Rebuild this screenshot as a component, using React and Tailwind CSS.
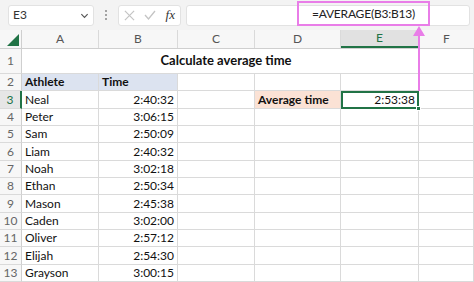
import React from "react";

const rows = [
  ["Neal", "2:40:32"],
  ["Peter", "3:06:15"],
  ["Sam", "2:50:09"],
  ["Liam", "2:40:32"],
  ["Noah", "3:02:18"],
  ["Ethan", "2:50:34"],
  ["Mason", "2:45:38"],
  ["Caden", "3:02:00"],
  ["Oliver", "2:57:12"],
  ["Elijah", "2:54:30"],
  ["Grayson", "3:00:15"],
];

const heights = [17, 18, 17, 17, 18, 17, 17, 18, 17, 17, 18, 17];

function Cell({ w, className = "", children }) {
  return (
    <div className={`flex h-full shrink-0 items-center border-r border-b border-[#dadada] px-[3px] ${w} ${className}`}>
      {children}
    </div>
  );
}

function RowHead({ n, active }) {
  return (
    <div
      className={`flex h-full w-[22px] shrink-0 items-center justify-center border-b border-[#dadada] text-[12px] ${
        active ? "border-r-2 border-r-[#217346] bg-[#e6e6e6] text-[#217346]" : "border-r border-r-[#cfcfcf] bg-[#f7f7f7] text-[#666]"
      }`}
    >
      {n}
    </div>
  );
}

export default function App() {
  return (
    <div className="relative h-[282px] w-[474px] overflow-hidden bg-white text-[#111]" style={{ fontFamily: "Lato, 'Liberation Sans', sans-serif" }}>
      {/* formula bar */}
      <div className="flex h-[30px] items-center gap-[5px] bg-[#f3f3f3] pl-[8px] pr-[4px]">
        <div className="flex h-[21px] w-[86px] items-center justify-between rounded-[3px] border border-[#e2e2e2] bg-white pl-[4px] pr-[4px] text-[12px] text-[#333]">
          <span>E3</span>
          <svg width="9" height="9" viewBox="0 0 10 10" fill="none" stroke="#555" strokeWidth="1.3">
            <path d="M1.5 3.5 L5 7 L8.5 3.5" />
          </svg>
        </div>
        <div className="flex w-[14px] flex-col items-center gap-[2px]">
          <span className="h-[2px] w-[2px] rounded-full bg-[#888]" />
          <span className="h-[2px] w-[2px] rounded-full bg-[#888]" />
          <span className="h-[2px] w-[2px] rounded-full bg-[#888]" />
        </div>
        <div className="flex h-[21px] w-[63px] items-center justify-between rounded-[3px] border border-[#e2e2e2] bg-white px-[5px]">
          <svg width="11" height="11" viewBox="0 0 12 12" stroke="#c4c4c4" strokeWidth="1.3">
            <path d="M1 1 L11 11 M11 1 L1 11" />
          </svg>
          <svg width="12" height="10" viewBox="0 0 12 10" fill="none" stroke="#c4c4c4" strokeWidth="1.3">
            <path d="M1 5 L4.5 9 L11 1" />
          </svg>
          <span className="text-[13px] italic text-[#333]" style={{ fontFamily: "'Liberation Serif', serif" }}>
            fx
          </span>
        </div>
        <div className="h-[21px] flex-1 rounded-[3px] border border-[#e2e2e2] bg-white" />
      </div>

      {/* column headers */}
      <div className="flex h-[19px] border-b border-[#cfcfcf] bg-[#f7f7f7] text-[12px] text-[#555]">
        <div className="flex w-[22px] shrink-0 items-end justify-end border-r border-[#cfcfcf] pb-[2px] pr-[2px]">
          <svg width="12" height="12" viewBox="0 0 12 12">
            <path d="M12 0 L12 12 L0 12 Z" fill="#217346" />
          </svg>
        </div>
        <div className="flex w-[77px] shrink-0 items-center justify-center border-r border-[#dadada]">A</div>
        <div className="flex w-[79px] shrink-0 items-center justify-center border-r border-[#dadada]">B</div>
        <div className="flex w-[77px] shrink-0 items-center justify-center border-r border-[#dadada]">C</div>
        <div className="flex w-[86px] shrink-0 items-center justify-center border-r border-[#dadada]">D</div>
        <div className="flex w-[78px] shrink-0 items-center justify-center border-r border-b-2 border-[#dadada] border-b-[#217346] bg-[#e1e1e1] text-[#217346]">
          E
        </div>
        <div className="flex flex-1 items-center justify-center">F</div>
      </div>

      {/* row 1 */}
      <div className="flex h-[25px] text-[13px]">
        <RowHead n={1} />
        <div className="flex h-full w-[397px] shrink-0 items-center justify-center border-r border-b border-[#dadada] pl-[12px] font-bold">
          Calculate average time
        </div>
        <Cell w="flex-1" />
      </div>

      {/* row 2 */}
      <div className="flex h-[17px] text-[12px]">
        <RowHead n={2} />
        <Cell w="w-[77px]" className="bg-[#dce3f0] font-bold">Athlete</Cell>
        <Cell w="w-[79px]" className="bg-[#dce3f0] font-bold">Time</Cell>
        <Cell w="w-[77px]" />
        <Cell w="w-[86px]" />
        <Cell w="w-[78px]" />
        <Cell w="flex-1" />
      </div>

      {rows.map(([name, time], i) => (
        <div key={name} className="flex text-[12px]" style={{ height: heights[i + 1] }}>
          <RowHead n={i + 3} active={i === 0} />
          <Cell w="w-[77px]">{name}</Cell>
          <Cell w="w-[79px]" className="justify-end">{time}</Cell>
          <Cell w="w-[77px]" />
          {i === 0 ? (
            <>
              <Cell w="w-[86px]" className="bg-[#fbe2d5] font-bold">Average time</Cell>
              <div className="relative flex h-full w-[78px] shrink-0 items-center justify-end border-2 border-[#217346] px-[2px]">
                2:53:38
                <span className="absolute -right-[4px] -bottom-[4px] h-[5px] w-[5px] border border-white bg-[#217346]" />
              </div>
            </>
          ) : (
            <>
              <Cell w="w-[86px]" />
              <Cell w="w-[78px]" />
            </>
          )}
          <Cell w="flex-1" />
        </div>
      ))}

      {/* callout box around formula */}
      <div className="absolute left-[297px] top-[1px] flex h-[25px] w-[133px] items-center justify-center border-2 border-[#e97de8] text-[12px] tracking-[-0.2px] text-[#222]">
        =AVERAGE(B3:B13)
      </div>
      {/* arrow */}
      <div className="absolute left-[418px] top-[33px] h-[58px] w-[2px] bg-[#e97de8]" />
      <svg className="absolute left-[413px] top-[26px]" width="12" height="10" viewBox="0 0 12 10">
        <path d="M6 0 L12 10 L0 10 Z" fill="#e97de8" />
      </svg>
    </div>
  );
}
